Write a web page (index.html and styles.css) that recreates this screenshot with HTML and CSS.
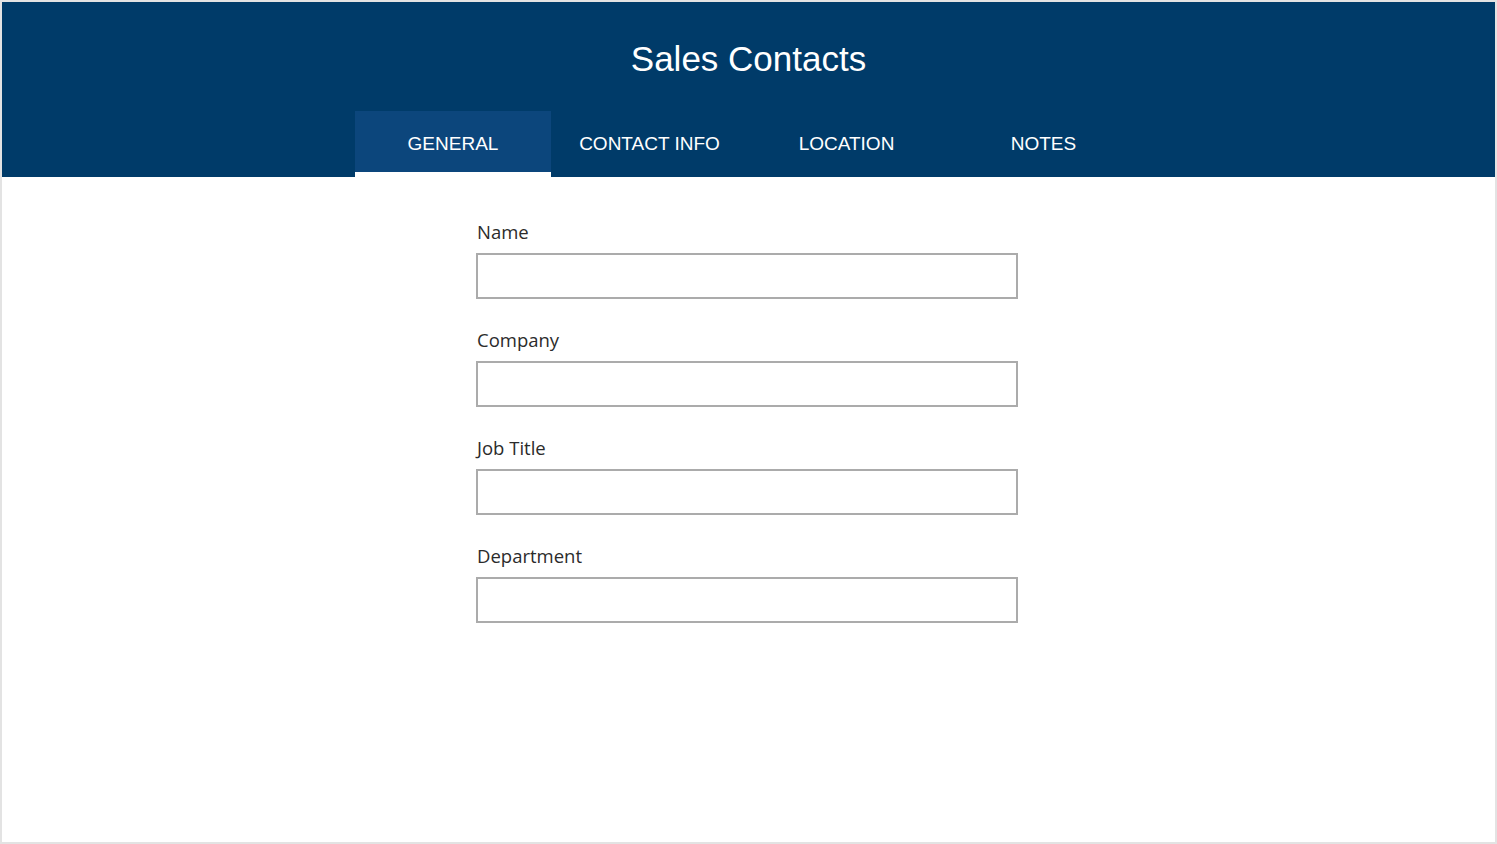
FILE: index.html
```html
<!DOCTYPE html>
<html lang="en">
<head>
<meta charset="utf-8">
<title>Sales Contacts</title>
<link rel="stylesheet" href="styles.css">
</head>
<body>
<div class="frame">
  <header class="header">
    <h1 class="title">Sales Contacts</h1>
    <nav class="tabs">
      <div class="tab active">GENERAL</div>
      <div class="tab">CONTACT INFO</div>
      <div class="tab">LOCATION</div>
      <div class="tab">NOTES</div>
    </nav>
  </header>
  <main class="form">
    <div class="field">
      <label class="label">Name</label>
      <div class="input"></div>
    </div>
    <div class="field">
      <label class="label">Company</label>
      <div class="input"></div>
    </div>
    <div class="field">
      <label class="label">Job Title</label>
      <div class="input"></div>
    </div>
    <div class="field">
      <label class="label">Department</label>
      <div class="input"></div>
    </div>
  </main>
</div>
</body>
</html>
```
FILE: styles.css
```css
* { box-sizing: border-box; }
html, body { margin: 0; padding: 0; }
body { background: #ffffff; }
.frame {
  width: 1497px;
  height: 844px;
  border: 2px solid #e3e3e3;
  background: #ffffff;
  display: flex;
  flex-direction: column;
}
.header {
  background: #003b69;
  height: 175px;
  display: flex;
  flex-direction: column;
  align-items: center;
}
.title {
  margin: 0;
  padding-top: 36px;
  height: 109px;
  font-family: "Liberation Sans", Arial, sans-serif;
  font-weight: normal;
  font-size: 35px;
  line-height: 42px;
  color: #ffffff;
}
.tabs {
  display: flex;
  height: 66px;
  align-self: flex-start;
  margin-left: 353px;
}
.tab {
  width: 197px;
  height: 66px;
  display: flex;
  align-items: center;
  justify-content: center;
  font-family: "Liberation Sans", Arial, sans-serif;
  font-size: 19px;
  color: #ffffff;
}
.tab.active {
  width: 196px;
  background: #0c467c;
  border-bottom: 5px solid #ffffff;
  padding-top: 5px;
}
.form {
  width: 542px;
  margin-left: 474px;
  padding-top: 41px;
  display: flex;
  flex-direction: column;
  gap: 27px;
}
.field {
  display: flex;
  flex-direction: column;
}
.label {
  font-family: "Open Sans", "Noto Sans", sans-serif;
  font-size: 18.5px;
  font-weight: 500;
  line-height: 26px;
  color: #2b2b2b;
  padding-left: 1px;
  padding-top: 0.5px;
  margin-bottom: 8.5px;
}
.input {
  height: 46px;
  border: 2px solid #ababab;
  background: #ffffff;
}
```
